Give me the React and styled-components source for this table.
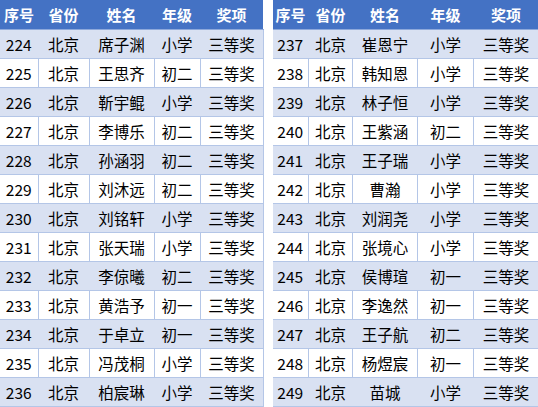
import React from "react";
import styled, { createGlobalStyle } from "styled-components";

const Global = createGlobalStyle`
  html, body { margin: 0; padding: 0; background: #ffffff; }
  body { font-family: "Noto Sans CJK SC", "Noto Sans", sans-serif; }
`;

const Page = styled.div`
  display: flex;
  gap: 9px;
  width: 538px;
  align-items: flex-start;
`;

const Table = styled.table`
  border-collapse: collapse;
  table-layout: fixed;
  width: ${(p) => p.$w}px;
  font-size: 15.5px;
  color: #000;
`;

const HeadCell = styled.th`
  height: 29px;
  padding: 0;
  background: #4472c4;
  color: #ffffff;
  font-weight: 700;
  font-size: 15px;
  text-align: center;
  border-bottom: 1px solid #8ea9db;
  white-space: nowrap;
`;

const Row = styled.tr`
  background: ${(p) => (p.$band ? "#d9e1f2" : "#ffffff")};
`;

const Cell = styled.td`
  height: 28px;
  padding: 0;
  text-align: center;
  white-space: nowrap;
  border-bottom: 1px solid #b4c6e7;
  border-left: 1px solid ${(p) => (p.$band ? "#d9e1f2" : "#b4c6e7")};
  &:first-child { border-left: none; }
  &:last-child { border-right: 1px solid #b4c6e7; }
`;

const left = [
  ["224", "北京", "席子渊", "小学", "三等奖"],
  ["225", "北京", "王思齐", "初二", "三等奖"],
  ["226", "北京", "靳宇鲲", "小学", "三等奖"],
  ["227", "北京", "李博乐", "初二", "三等奖"],
  ["228", "北京", "孙涵羽", "初二", "三等奖"],
  ["229", "北京", "刘沐远", "初二", "三等奖"],
  ["230", "北京", "刘铭轩", "小学", "三等奖"],
  ["231", "北京", "张天瑞", "小学", "三等奖"],
  ["232", "北京", "李倞曦", "初二", "三等奖"],
  ["233", "北京", "黄浩予", "初一", "三等奖"],
  ["234", "北京", "于卓立", "初一", "三等奖"],
  ["235", "北京", "冯茂桐", "小学", "三等奖"],
  ["236", "北京", "柏宸琳", "小学", "三等奖"],
];

const right = [
  ["237", "北京", "崔恩宁", "小学", "三等奖"],
  ["238", "北京", "韩知恩", "小学", "三等奖"],
  ["239", "北京", "林子恒", "小学", "三等奖"],
  ["240", "北京", "王紫涵", "初二", "三等奖"],
  ["241", "北京", "王子瑞", "小学", "三等奖"],
  ["242", "北京", "曹瀚", "小学", "三等奖"],
  ["243", "北京", "刘润尧", "小学", "三等奖"],
  ["244", "北京", "张境心", "小学", "三等奖"],
  ["245", "北京", "侯博瑄", "初一", "三等奖"],
  ["246", "北京", "李逸然", "初一", "三等奖"],
  ["247", "北京", "王子航", "初二", "三等奖"],
  ["248", "北京", "杨煜宸", "初一", "三等奖"],
  ["249", "北京", "苗城", "小学", "三等奖"],
];

const heads = ["序号", "省份", "姓名", "年级", "奖项"];

function DataTable({ rows, cols }) {
  const w = cols.reduce((a, b) => a + b, 0);
  return (
    <Table $w={w}>
      <colgroup>
        {cols.map((c, i) => (
          <col key={i} style={{ width: c }} />
        ))}
      </colgroup>
      <thead>
        <tr>
          {heads.map((h) => (
            <HeadCell key={h}>{h}</HeadCell>
          ))}
        </tr>
      </thead>
      <tbody>
        {rows.map((r, i) => (
          <Row key={r[0]} $band={i % 2 === 0}>
            {r.map((v, j) => (
              <Cell key={j} $band={i % 2 === 0}>
                {v}
              </Cell>
            ))}
          </Row>
        ))}
      </tbody>
    </Table>
  );
}

export default function App() {
  return (
    <>
      <Global />
      <Page>
        <DataTable rows={left} cols={[38, 51, 65, 46, 63]} />
        <DataTable rows={right} cols={[36, 44, 65, 56, 65]} />
      </Page>
    </>
  );
}
